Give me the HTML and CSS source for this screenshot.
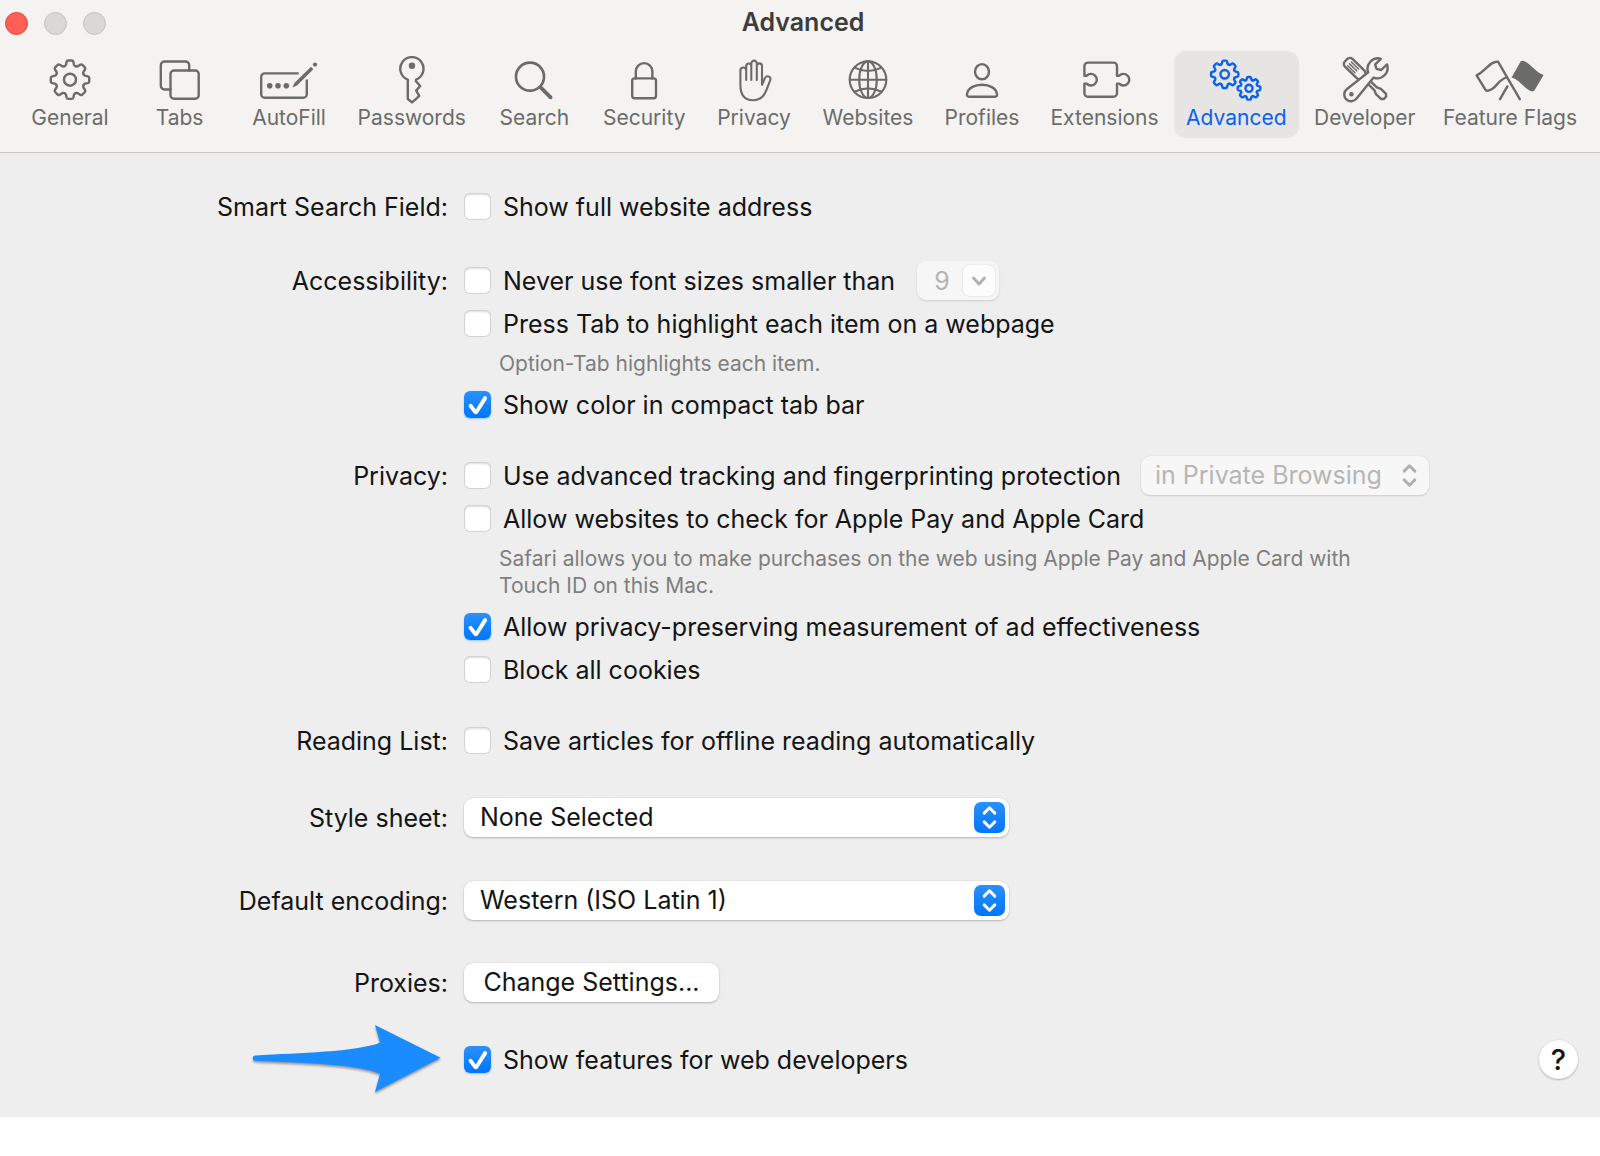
FILE: index.html
```html
<!DOCTYPE html>
<html lang="en">
<head>
<meta charset="utf-8">
<title>Advanced</title>
<link rel="stylesheet" href="styles.css">
</head>
<body>
<svg class="defs" aria-hidden="true">
  <defs>
    <path id="tooth" vector-effect="non-scaling-stroke" d="M-5.6-13.5C-4.6-13.9-4.2-14.2-4-15L-3.4-17.8Q-3-19.2-1.8-19.2H1.8Q3-19.2 3.4-17.8L4-15C4.2-14.2 4.6-13.9 5.6-13.5"/>
    <g id="gear">
      <use href="#tooth"/>
      <use href="#tooth" transform="rotate(45)"/>
      <use href="#tooth" transform="rotate(90)"/>
      <use href="#tooth" transform="rotate(135)"/>
      <use href="#tooth" transform="rotate(180)"/>
      <use href="#tooth" transform="rotate(225)"/>
      <use href="#tooth" transform="rotate(270)"/>
      <use href="#tooth" transform="rotate(315)"/>
      <circle r="6" vector-effect="non-scaling-stroke"/>
    </g>
    <path id="updown" d="M-5.5-4.5 0-10 5.5-4.5M-5.5 4.5 0 10 5.5 4.5"/>
  </defs>
</svg>

<main class="window">
  <header class="titlebar">
    <div class="lights">
      <button class="light close" aria-label="Close"></button>
      <button class="light" aria-label="Minimize" disabled></button>
      <button class="light" aria-label="Zoom" disabled></button>
    </div>
    <h1 class="title">Advanced</h1>
    <nav class="toolbar">
      <button class="tab">
        <svg class="icon" viewBox="-36 0 72 48"><use href="#gear" transform="translate(0 23.7)"/></svg>
        <span>General</span>
      </button>
      <button class="tab">
        <svg class="icon" viewBox="-36 0 72 48"><rect x="-9.5" y="14.5" width="28.2" height="28.2" rx="3.5"/><path d="M9.2 14.5V9.3a3.8 3.8 0 0 0-3.8-3.8H-15.4a3.8 3.8 0 0 0-3.8 3.8V29.7a3.8 3.8 0 0 0 3.8 3.8H-9.5"/></svg>
        <span>Tabs</span>
      </button>
      <button class="tab">
        <svg class="icon" viewBox="-36 0 72 48"><path stroke-linecap="butt" d="M9.7 17.4H-24.3a3.5 3.5 0 0 0-3.5 3.5V38.3a3.5 3.5 0 0 0 3.5 3.5H14.3a3.5 3.5 0 0 0 3.5-3.5V23.5"/><g class="solid"><circle cx="-19.3" cy="29.7" r="2.8"/><circle cx="-11" cy="29.7" r="2.8"/><circle cx="-2.7" cy="29.7" r="2.8"/><path d="M3.4 31.6 5.4 27 22 10.8 24.4 13.2 8 29.4Z"/><circle cx="26" cy="8.6" r="2.1"/></g></svg>
        <span>AutoFill</span>
      </button>
      <button class="tab">
        <svg class="icon" viewBox="-36 0 72 48"><path d="M-4.2 23.6A11.6 11.6 0 1 1 4 23.6V25.2L8.2 30 4.2 34.6 7.2 39.8 4 43 0 46.4-4.2 43Z"/><circle class="solid" cx="0" cy="9.7" r="3.2"/></svg>
        <span>Passwords</span>
      </button>
      <button class="tab">
        <svg class="icon" viewBox="-36 0 72 48"><circle cx="-4" cy="20.7" r="14" stroke-width="2.7"/><path stroke-width="3.8" d="M6.6 31.3 16.6 41.3"/></svg>
        <span>Search</span>
      </button>
      <button class="tab">
        <svg class="icon" viewBox="-36 0 72 48"><rect x="-11.8" y="22.4" width="23.8" height="19.8" rx="2.4"/><path d="M-8.2 22.4V15.4a8.3 8.3 0 0 1 16.6 0V22.4"/></svg>
        <span>Security</span>
      </button>
      <button class="tab">
        <svg class="icon" viewBox="-36 0 72 48"><path stroke-width="2.1" d="M-7.8 24V14.4a2.9 2.9 0 0 0-5.8 0V29C-13.6 39-9 44.2-1 44.2 5 44.2 9.4 41.6 12 35L16 24.8C17 22 16.2 20.8 14.6 20.4 12.4 19.8 11.4 21 10.8 22.4L8 28.8V10A2.6 2.6 0 0 0 2.8 10V24M-7.8 16V10a2.55 2.55 0 0 1 5.1 0V24M-2.7 12V7.4a2.75 2.75 0 0 1 5.5 0V12"/></svg>
        <span>Privacy</span>
      </button>
      <button class="tab">
        <svg class="icon" viewBox="-36 0 72 48"><g stroke-width="2.1"><circle cx="0" cy="23.7" r="18.3"/><ellipse cx="0" cy="23.7" rx="8.8" ry="18.3"/><path d="M0 5.4V42M-18.3 23.7H18.3M-13.4 11.6Q0 18.4 13.4 11.6M-13.4 35.8Q0 29 13.4 35.8"/></g></svg>
        <span>Websites</span>
      </button>
      <button class="tab">
        <svg class="icon" viewBox="-36 0 72 48"><ellipse cx="0" cy="15.7" rx="7" ry="7.6"/><path d="M-13 40.7H13Q15.4 40.7 15 38C14 32 7.5 28.8 0 28.8S-14 32-15 38Q-15.4 40.7-13 40.7Z"/></svg>
        <span>Profiles</span>
      </button>
      <button class="tab">
        <svg class="icon" viewBox="-36 0 72 48"><path d="M-20.6 10.2a3.6 3.6 0 0 1 3.6-3.6H8.4a3.6 3.6 0 0 1 3.6 3.6V19.8H14.2A5.8 5.8 0 1 1 14.2 27.6H12V37.2a3.6 3.6 0 0 1-3.6 3.6H-17a3.6 3.6 0 0 1-3.6-3.6V27.6H-18.3A5.8 5.8 0 1 0-18.3 19.8H-20.6Z"/></svg>
        <span>Extensions</span>
      </button>
      <button class="tab selected" aria-current="page">
        <svg class="icon" viewBox="-36 0 72 48"><use href="#gear" transform="translate(-11.3 18.3) scale(.71)"/><use href="#gear" transform="translate(13 32.3) scale(.59)"/></svg>
        <span>Advanced</span>
      </button>
      <button class="tab">
        <svg class="icon" viewBox="-36 0 72 48"><g transform="translate(.5 23) rotate(44)"><rect x="-27" y="-5.4" width="24" height="10.8" rx="3.6"/><path stroke-width="1.5" d="M-22-2.4H-12M-22 .2H-12M-22 2.8H-12"/><path d="M-3-1.8H14L18-3.6H25L27-1.8V1.8L25 3.6H18L14 1.8H-3"/></g><path class="cover" d="M15.8 2.8A10.4 10.4 0 0 0 3.2 16.4L-18 33A6.8 6.8 0 1 0-8.4 42.4L8.6 21.6A10.4 10.4 0 0 0 22 8.4L16.2 14 11.4 12.8 10.2 8.4Z"/><circle class="solid" cx="-13.6" cy="38.2" r="2.3"/></svg>
        <span>Developer</span>
      </button>
      <button class="tab">
        <svg class="icon" viewBox="-36 0 72 48"><path d="M-12 5.6 9.8 43.2M-12 5.6C-20 5-24 15-33.4 19.4L-24 34.6C-15 36-12 22.6-3 21.4M-2.6 30.4-10 43.2"/><path class="solid" d="M10.6 5.6Q12.2 4.2 14.4 5.2C21 8 26 16.4 33.6 19L24.4 34.4Q23.4 35.6 21.6 35.2C14 33 9.4 23.4 1.6 21.6Z"/></svg>
        <span>Feature Flags</span>
      </button>
    </nav>
  </header>

  <form class="settings">
    <section class="group">
      <h2 class="name">Smart Search Field:</h2>
      <div class="fields">
        <div class="row"><label class="option"><input type="checkbox" class="check">Show full website address</label></div>
      </div>
    </section>

    <section class="group">
      <h2 class="name">Accessibility:</h2>
      <div class="fields">
        <div class="row">
          <label class="option"><input type="checkbox" class="check">Never use font sizes smaller than</label>
          <div class="combo">
            <input type="text" class="size" value="9" aria-label="Minimum font size" disabled>
            <button type="button" class="drop" aria-label="Choose size" disabled><svg viewBox="-16 -16 32 32"><path d="M-5.5-3 0 3 5.5-3"/></svg></button>
          </div>
        </div>
        <div class="row"><label class="option"><input type="checkbox" class="check">Press Tab to highlight each item on a webpage</label></div>
        <p class="note">Option-Tab highlights each item.</p>
        <div class="row"><label class="option"><input type="checkbox" class="check" checked>Show color in compact tab bar</label></div>
      </div>
    </section>

    <section class="group">
      <h2 class="name">Privacy:</h2>
      <div class="fields">
        <div class="row">
          <label class="option"><input type="checkbox" class="check">Use advanced tracking and fingerprinting protection</label>
          <div class="popup faded">
            <select class="choice" aria-label="Tracking protection scope" disabled><option>in Private Browsing</option></select>
            <svg class="arrows" viewBox="-16 -16 32 32"><use href="#updown"/></svg>
          </div>
        </div>
        <div class="row"><label class="option"><input type="checkbox" class="check">Allow websites to check for Apple Pay and Apple Card</label></div>
        <p class="note">Safari allows you to make purchases on the web using Apple Pay and Apple Card with Touch ID on this Mac.</p>
        <div class="row"><label class="option"><input type="checkbox" class="check" checked>Allow privacy-preserving measurement of ad effectiveness</label></div>
        <div class="row"><label class="option"><input type="checkbox" class="check">Block all cookies</label></div>
      </div>
    </section>

    <section class="group">
      <h2 class="name">Reading List:</h2>
      <div class="fields">
        <div class="row"><label class="option"><input type="checkbox" class="check">Save articles for offline reading automatically</label></div>
      </div>
    </section>

    <section class="group spaced">
      <label class="name" for="sheet">Style sheet:</label>
      <div class="fields">
        <div class="row">
          <div class="popup wide">
            <select class="choice" id="sheet"><option>None Selected</option></select>
            <svg class="arrows" viewBox="-16 -16 32 32"><use href="#updown"/></svg>
          </div>
        </div>
      </div>
    </section>

    <section class="group roomy">
      <label class="name" for="encoding">Default encoding:</label>
      <div class="fields">
        <div class="row">
          <div class="popup wide">
            <select class="choice" id="encoding"><option>Western (ISO Latin 1)</option></select>
            <svg class="arrows" viewBox="-16 -16 32 32"><use href="#updown"/></svg>
          </div>
        </div>
      </div>
    </section>

    <section class="group roomy">
      <h2 class="name">Proxies:</h2>
      <div class="fields">
        <div class="row"><button type="button" class="push">Change Settings...</button></div>
      </div>
    </section>

    <section class="group spaced">
      <div class="name pointer">
        <svg class="arrow" viewBox="0 0 194 76" aria-hidden="true"><path d="M5.5 34.4C50 32 105 31 130 21.8L125 4 190.7 36.8 125 71 130 53C108 43 50 42 5.5 39.8A2.7 2.7 0 0 1 5.5 34.4Z"/></svg>
      </div>
      <div class="fields">
        <div class="row">
          <label class="option"><input type="checkbox" class="check" checked>Show features for web developers</label>
          <button type="button" class="help" aria-label="Help">?</button>
        </div>
      </div>
    </section>
  </form>
</main>
</body>
</html>
```
FILE: styles.css
```css
* { box-sizing: border-box; }

body {
  margin: 0;
  background: #fff;
  color: #141414;
  font: 25px/32px Inter, "Liberation Sans", sans-serif;
}

button, input, select {
  margin: 0;
  padding: 0;
  border: 0;
  font: inherit;
  color: inherit;
  background: none;
  appearance: none;
}

.defs { position: absolute; width: 0; height: 0; }

.window { background: #eee; }

/* Title bar and toolbar */
.titlebar {
  position: relative;
  padding: 6px 6px 14px;
  background: #f4f3f2;
  border-bottom: 1px solid #c8c8c8;
}

.lights {
  position: absolute;
  top: 12px;
  left: 5px;
  display: flex;
  gap: 16px;
}

.light {
  width: 23px;
  height: 23px;
  border: 1px solid #c3c2c1;
  border-radius: 50%;
  background: #d9d8d7;
}

.close { background: #ff5f57; border-color: #e2453e; }

.title {
  margin: 0 0 13px;
  padding-left: 6px;
  font-size: 25px;
  line-height: 32px;
  font-weight: 600;
  text-align: center;
  color: #3c3c3c;
}

.toolbar {
  display: flex;
  justify-content: space-between;
  padding: 0 5px 0 11px;
}

.tab {
  display: flex;
  flex-direction: column;
  align-items: center;
  gap: 1px;
  min-width: 106px;
  padding: 5px 12px 7px;
  border-radius: 12px;
  font-size: 21px;
  line-height: 26px;
  white-space: nowrap;
  color: #6b6b6a;
}

.tab.selected { background: #e6e5e4; color: #0a60f0; }

.icon {
  width: 72px;
  height: 48px;
  margin: 0 -6px;
  fill: none;
  stroke: currentColor;
  stroke-width: 2.4;
  stroke-linecap: round;
  stroke-linejoin: round;
}

.icon .solid { fill: currentColor; stroke: none; }
.icon .cover { fill: #f4f3f2; }

/* Settings form */
.settings { padding: 32px 0 36px; }

.group {
  display: grid;
  grid-template-columns: 28% 1fr;
  column-gap: 16px;
  margin-bottom: 28px;
}

.group:first-child { margin-bottom: 31px; }
.group:last-child { margin-bottom: 0; }
.spaced { margin-top: 34px; }
.roomy { margin-top: 40px; }
.roomy + .roomy { margin-top: 39px; }

.name {
  display: flex;
  align-items: center;
  justify-content: flex-end;
  height: 43px;
  margin: 0;
  font-size: 25px;
  font-weight: 400;
  line-height: 32px;
}

.row {
  display: flex;
  align-items: center;
  height: 43px;
}

.option {
  display: flex;
  align-items: center;
  gap: 12px;
}

.check {
  width: 27px;
  height: 27px;
  border-radius: 6px;
  background: #fff;
  box-shadow: inset 0 0 0 1px #d2d2d2, inset 0 2px 2px #ddd;
}

.check:checked {
  background: linear-gradient(#2b90ff, #0076fb);
  box-shadow: 0 1px 2px #9cc6f8;
}

.check:checked::before {
  content: "";
  display: block;
  width: 27px;
  height: 27px;
  background: #fff;
  clip-path: path("M4.5 15.2Q4.3 13 6.4 12.8Q7.6 12.8 8.4 14L11.8 18.4L19.4 6Q20.8 4.4 22.4 5.4Q23.6 6.6 22.8 8.2L14 22Q12 24.4 9.8 22.2Z");
}

.note {
  max-width: 940px;
  margin: 0;
  padding: 5px 0 6px 35px;
  font-size: 21px;
  line-height: 27px;
  color: #7e7e7e;
}

.combo {
  display: flex;
  align-items: center;
  width: 82px;
  height: 39px;
  margin-left: 22px;
  padding-right: 4px;
  border-radius: 9px;
  background: #f6f6f6;
  box-shadow: 0 1px 2px #ccc;
}

.size {
  width: 46px;
  padding-left: 4px;
  text-align: center;
  color: #b4b4b4;
}

.drop {
  width: 32px;
  height: 31px;
  border-radius: 7px;
  background: #fcfcfc;
  box-shadow: 0 0 2px #d0d0d0;
}

.drop svg, .arrows {
  display: block;
  width: 32px;
  height: 32px;
  fill: none;
  stroke: #b0b0b0;
  stroke-width: 3;
  stroke-linecap: round;
  stroke-linejoin: round;
}

.popup { position: relative; }
.wide { width: 545px; }
.faded { width: 288px; margin-left: 20px; }

.choice, .push {
  width: 100%;
  height: 39px;
  padding: 0 16px 2px;
  border-radius: 9px;
  background: #fff;
  box-shadow: 0 0 1px #bbb, 0 1px 2px #b4b4b4;
}

.choice { display: block; opacity: 1; }
.push { width: 255px; }

.faded .choice {
  padding-left: 14px;
  color: #b6b6b6;
  background: #f7f7f7;
  box-shadow: 0 0 1px #ccc, 0 1px 2px #ccc;
}

.arrows {
  position: absolute;
  top: 4px;
  right: 4px;
  width: 31px;
  height: 31px;
  border-radius: 7px;
  background: linear-gradient(#2b90ff, #0076fb);
  stroke: #fff;
  pointer-events: none;
}

.faded .arrows { background: none; stroke: #b0b0b0; }

.pointer { position: relative; }

.arrow {
  position: absolute;
  top: -17px;
  right: 4px;
  width: 194px;
  height: 76px;
  fill: #1a8cff;
  filter: drop-shadow(0 2px 1px rgba(0, 0, 0, .35));
}

.help {
  width: 39px;
  height: 39px;
  margin: 0 22px 0 auto;
  border-radius: 50%;
  background: #fff;
  font-size: 29px;
  font-weight: 500;
  box-shadow: 0 0 1px #bbb, 0 1px 2px #b0b0b0;
}
```
